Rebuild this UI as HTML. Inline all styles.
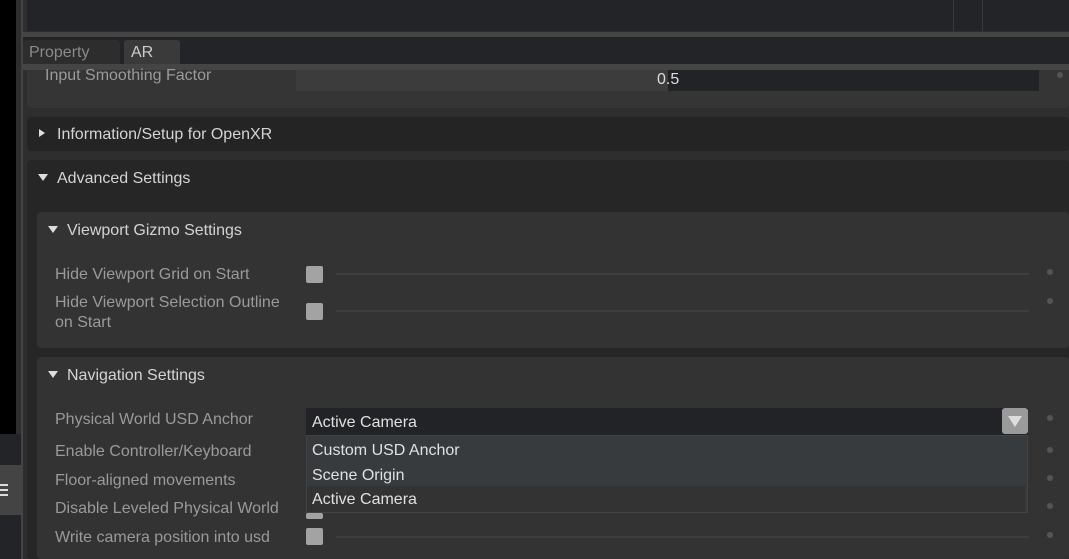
<!DOCTYPE html>
<html><head><meta charset="utf-8"><style>
*{margin:0;padding:0;box-sizing:border-box}
body{width:1069px;height:559px;overflow:hidden;background:#2e2e2e;font-family:"Liberation Sans","DejaVu Sans",sans-serif;color:#c8c8c8;position:relative}
.a{position:absolute}
.t{font-size:16px;white-space:nowrap}
.lbl{color:#9a9a9a;font-size:16px;white-space:nowrap}
.dn{width:0;height:0;border-left:5px solid transparent;border-right:5px solid transparent;border-top:7px solid #ddd}
.rt{width:0;height:0;border-top:4.5px solid transparent;border-bottom:4.5px solid transparent;border-left:6px solid #ddd}
.cb{width:17px;height:17px;background:#a3a3a3;border-radius:2px}
.ln{height:2px;background:#3c3f3f}
.dot{width:6px;height:6px;border-radius:3px;background:#555}
</style></head><body>
<div class="a" style="left:0;top:0;width:16px;height:434px;background:#000"></div>
<div class="a" style="left:0;top:434px;width:21px;height:125px;background:#232427"></div>
<div class="a" style="left:0;top:465px;width:21px;height:50px;background:#444"></div>
<div class="a" style="left:0;top:484px;width:8px;height:2px;background:#ddd"></div>
<div class="a" style="left:0;top:489px;width:8px;height:2px;background:#ddd"></div>
<div class="a" style="left:0;top:494px;width:8px;height:2px;background:#ddd"></div>
<div class="a" style="left:21px;top:0;width:2px;height:559px;background:#444"></div>
<div class="a" style="left:23px;top:0;width:1046px;height:32px;background:#2e2e2e"></div>
<div class="a" style="left:27px;top:0;width:1042px;height:31px;background:#232427"></div>
<div class="a" style="left:953px;top:0;width:1px;height:31px;background:#3a3a3a"></div>
<div class="a" style="left:982px;top:0;width:1px;height:31px;background:#3a3a3a"></div>
<div class="a" style="left:23px;top:32px;width:1046px;height:5px;background:#454545"></div>
<div class="a" style="left:23px;top:37px;width:1046px;height:27px;background:#232427"></div>
<div class="a" style="left:23px;top:40px;width:97px;height:24px;background:#2d2d2d;border-radius:3px 3px 0 0"></div>
<div class="a t" style="left:29px;top:44px;color:#8a8a8a">Property</div>
<div class="a" style="left:124px;top:40px;width:56px;height:24px;background:#3a3a3a;border-radius:3px 3px 0 0"></div>
<div class="a t" style="left:131px;top:44px;color:#ccc">AR</div>
<div class="a" style="left:23px;top:64px;width:1046px;height:6px;background:#454545"></div>
<div class="a" style="left:27px;top:70px;width:1042px;height:38px;background:#353535;border-radius:0 0 4px 4px"></div>
<div class="a lbl" style="left:45px;top:67px">Input Smoothing Factor</div>
<div class="a" style="left:296px;top:70px;width:372px;height:21px;background:#3c3c3c"></div>
<div class="a" style="left:668px;top:70px;width:371px;height:21px;background:#222326"></div>
<div class="a t" style="left:657px;top:71px;color:#ddd">0.5</div>
<div class="a dot" style="left:1057px;top:72px"></div>
<div class="a" style="left:27px;top:117px;width:1042px;height:34px;background:#242424;border-radius:4px"></div>
<div class="a rt" style="left:39px;top:129px"></div>
<div class="a t" style="left:57px;top:126px;color:#d4d4d4">Information/Setup for OpenXR</div>
<div class="a" style="left:27px;top:160px;width:1042px;height:399px;background:#262626;border-radius:4px"></div>
<div class="a dn" style="left:38px;top:174px"></div>
<div class="a t" style="left:57px;top:170px;color:#d4d4d4">Advanced Settings</div>
<div class="a" style="left:37px;top:212px;width:1032px;height:136px;background:#333;border-radius:4px"></div>
<div class="a dn" style="left:48px;top:226px"></div>
<div class="a t" style="left:67px;top:222px;color:#d4d4d4">Viewport Gizmo Settings</div>
<div class="a lbl" style="left:55px;top:266px">Hide Viewport Grid on Start</div>
<div class="a cb" style="left:306px;top:266px"></div>
<div class="a ln" style="left:336px;top:273px;width:693px"></div>
<div class="a dot" style="left:1047px;top:269px"></div>
<div class="a lbl" style="left:55px;top:294px">Hide Viewport Selection Outline</div>
<div class="a lbl" style="left:55px;top:314px">on Start</div>
<div class="a cb" style="left:306px;top:303px"></div>
<div class="a ln" style="left:336px;top:310px;width:693px"></div>
<div class="a dot" style="left:1047px;top:298px"></div>
<div class="a" style="left:37px;top:357px;width:1032px;height:202px;background:#333;border-radius:4px"></div>
<div class="a dn" style="left:48px;top:371px"></div>
<div class="a t" style="left:67px;top:367px;color:#d4d4d4">Navigation Settings</div>
<div class="a lbl" style="left:55px;top:411px">Physical World USD Anchor</div>
<div class="a lbl" style="left:55px;top:443px">Enable Controller/Keyboard</div>
<div class="a lbl" style="left:55px;top:472px">Floor-aligned movements</div>
<div class="a lbl" style="left:55px;top:500px">Disable Leveled Physical World</div>
<div class="a lbl" style="left:55px;top:529px">Write camera position into usd</div>
<div class="a" style="left:306px;top:408px;width:722px;height:27px;background:#222326"></div>
<div class="a t" style="left:312px;top:414px;color:#e0e0e0">Active Camera</div>
<div class="a" style="left:1002px;top:408px;width:26px;height:26px;background:#9a9a9a;border-radius:3px"></div>
<div class="a" style="left:1008px;top:416px;width:0;height:0;border-left:7px solid transparent;border-right:7px solid transparent;border-top:11px solid #ddd"></div>
<div class="a" style="left:306px;top:435px;width:722px;height:78px;background:#383b3e;border:1px solid #444"></div>
<div class="a" style="left:307px;top:486px;width:718px;height:26px;background:#333"></div>
<div class="a t" style="left:312px;top:442px;color:#e0e0e0">Custom USD Anchor</div>
<div class="a t" style="left:312px;top:467px;color:#e0e0e0">Scene Origin</div>
<div class="a t" style="left:312px;top:491px;color:#e0e0e0">Active Camera</div>
<div class="a cb" style="left:306px;top:513px;height:6px"></div>
<div class="a cb" style="left:306px;top:528px"></div>
<div class="a ln" style="left:336px;top:536px;width:693px"></div>
<div class="a dot" style="left:1047px;top:415px"></div>
<div class="a dot" style="left:1047px;top:447px"></div>
<div class="a dot" style="left:1047px;top:475px"></div>
<div class="a dot" style="left:1047px;top:503px"></div>
<div class="a dot" style="left:1047px;top:532px"></div>
</body></html>
